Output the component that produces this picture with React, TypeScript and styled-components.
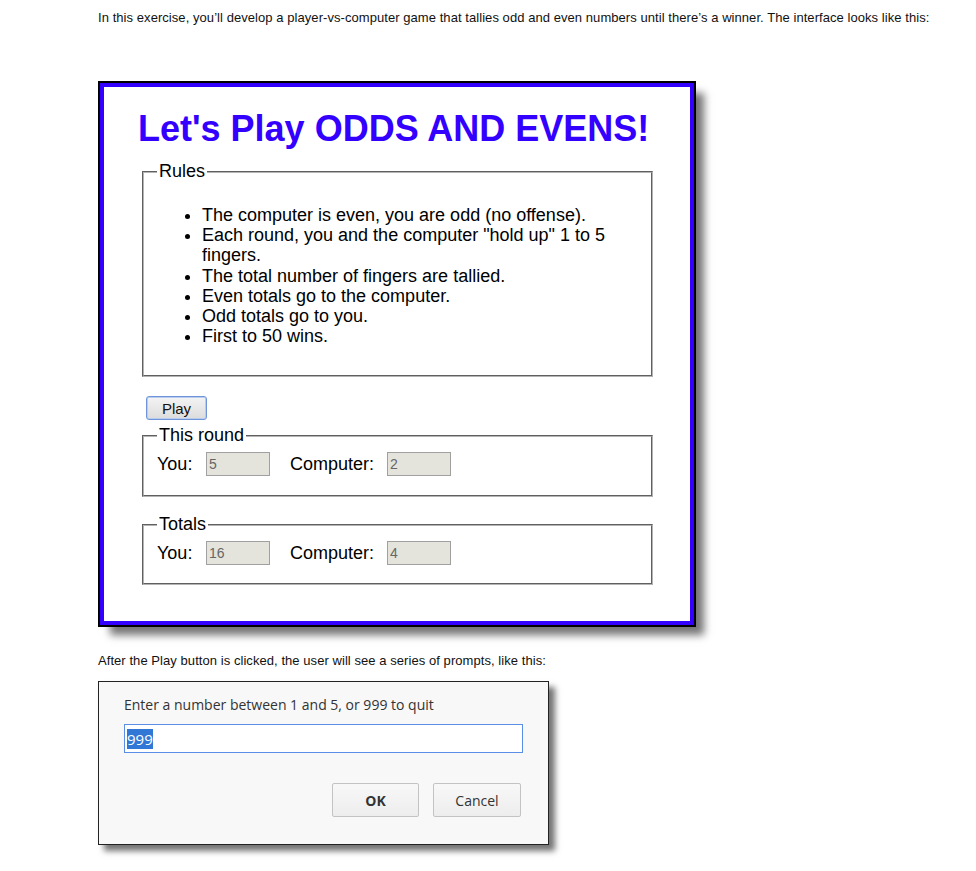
import styled, { createGlobalStyle } from "styled-components";

const GlobalStyle = createGlobalStyle`
  body {
    margin: 0;
    background: #fff;
    font-family: "Liberation Sans", Arial, sans-serif;
    color: #000;
  }
`;

const Page = styled.div`
  padding: 10px 0 20px 98px;
`;

const Note = styled.p<{ $top?: number }>`
  margin: ${(p) => p.$top ?? 0}px 0 0;
  font-size: 13px;
  line-height: 15px;
  letter-spacing: 0.06px;
  color: #111;
`;

const GameBox = styled.div`
  width: 511px;
  margin: 58px 0 0 2px;
  background: #fff;
  border: 4px solid #3300ff;
  outline: 2px solid #000;
  box-shadow: 10px 10px 8px rgba(0, 0, 0, 0.55);
  padding: 21px 37px 36px 38px;
  box-sizing: content-box;
  font-size: 18px;
`;

const Title = styled.h1`
  margin: 0 0 12px -4px;
  font-size: 36px;
  font-weight: bold;
  color: #3300ff;
  line-height: 41px;
  white-space: nowrap;
`;

const Group = styled.fieldset<{ $top?: number; $bottom: number }>`
  margin: ${(p) => p.$top ?? 0}px 0 0;
  padding: 0 13px ${(p) => p.$bottom}px;
  border: 2px groove #b4b4b4;
  min-width: 0;
`;

const Legend = styled.legend`
  padding: 0 2px;
  font-size: 18px;
  line-height: 21px;
`;

const RuleList = styled.ul`
  margin: 23px 0 18px;
  padding-left: 45px;
  font-size: 18px;
  line-height: 20.2px;
  width: 420px;
`;

const PlayButton = styled.button`
  display: block;
  margin: 19px 0 5px 4px;
  width: 61px;
  height: 24px;
  padding: 0;
  font-family: "Liberation Sans", Arial, sans-serif;
  font-size: 15px;
  color: #111;
  border: 1px solid #6f95d8;
  border-radius: 3px;
  background: linear-gradient(#f4f4f4, #dcdcdc);
  box-shadow: inset 0 0 0 1px #b8cdf0;
`;

const ScoreRow = styled.div`
  display: flex;
  align-items: center;
  height: 24px;
  margin-top: 6px;
`;

const ScoreLabel = styled.span<{ $w: number }>`
  width: ${(p) => p.$w}px;
  font-size: 18px;
`;

const ScoreField = styled.input`
  width: 64px;
  height: 24px;
  box-sizing: border-box;
  margin: 0 20px 0 0;
  padding: 0 2px;
  border: 1px solid #a0a0a0;
  background: #e4e4dc;
  color: #666;
  font-family: "Liberation Sans", Arial, sans-serif;
  font-size: 14px;
`;

const Prompt = styled.div`
  width: 451px;
  height: 164px;
  margin-top: 13px;
  border: 1px solid #222;
  background: #f8f8f8;
  box-shadow: 6px 6px 6px rgba(0, 0, 0, 0.55);
  padding: 13px 25px 0 25px;
  box-sizing: border-box;
  font-family: "Open Sans", "Segoe UI", sans-serif;
  color: #333;
`;

const PromptText = styled.div`
  font-size: 14px;
  line-height: 20px;
`;

const PromptInput = styled.div`
  margin-top: 9px;
  height: 29px;
  box-sizing: border-box;
  border: 1px solid #5b8ee6;
  background: #fff;
  display: flex;
  align-items: center;
  padding-left: 2px;
  font-size: 15px;
`;

const Selected = styled.span`
  background: #3178d6;
  color: #fff;
  line-height: 20px;
`;

const PromptActions = styled.div`
  display: flex;
  justify-content: flex-end;
  gap: 14px;
  margin-top: 30px;
  padding-right: 2px;
`;

const DialogButton = styled.button<{ $primary?: boolean }>`
  width: ${(p) => (p.$primary ? 87 : 88)}px;
  height: 34px;
  border: 1px solid #c3c3c3;
  border-radius: 2px;
  background: linear-gradient(#f8f8f8, #ededed);
  font-family: "Open Sans", "Segoe UI", sans-serif;
  font-size: 14px;
  font-weight: ${(p) => (p.$primary ? 700 : 400)};
  color: #333;
`;

const rules = [
  "The computer is even, you are odd (no offense).",
  'Each round, you and the computer "hold up" 1 to 5 fingers.',
  "The total number of fingers are tallied.",
  "Even totals go to the computer.",
  "Odd totals go to you.",
  "First to 50 wins.",
];

function Score({ you, computer }: { you: number; computer: number }) {
  return (
    <ScoreRow>
      <ScoreLabel $w={49}>You:</ScoreLabel>
      <ScoreField readOnly value={you} />
      <ScoreLabel $w={97}>Computer:</ScoreLabel>
      <ScoreField readOnly value={computer} />
    </ScoreRow>
  );
}

export default function App() {
  return (
    <Page>
      <GlobalStyle />
      <Note>
        In this exercise, you’ll develop a player-vs-computer game that tallies odd and even numbers until there’s a
        winner. The interface looks like this:
      </Note>

      <GameBox>
        <Title>Let's Play ODDS AND EVENS!</Title>
        <Group $bottom={11}>
          <Legend>Rules</Legend>
          <RuleList>
            {rules.map((r) => (
              <li key={r}>{r}</li>
            ))}
          </RuleList>
        </Group>
        <PlayButton>Play</PlayButton>
        <Group $bottom={19}>
          <Legend>This round</Legend>
          <Score you={5} computer={2} />
        </Group>
        <Group $top={17} $bottom={18}>
          <Legend>Totals</Legend>
          <Score you={16} computer={4} />
        </Group>
      </GameBox>

      <Note $top={28}>After the Play button is clicked, the user will see a series of prompts, like this:</Note>

      <Prompt>
        <PromptText>Enter a number between 1 and 5, or 999 to quit</PromptText>
        <PromptInput>
          <Selected>999</Selected>
        </PromptInput>
        <PromptActions>
          <DialogButton $primary>OK</DialogButton>
          <DialogButton>Cancel</DialogButton>
        </PromptActions>
      </Prompt>
    </Page>
  );
}
